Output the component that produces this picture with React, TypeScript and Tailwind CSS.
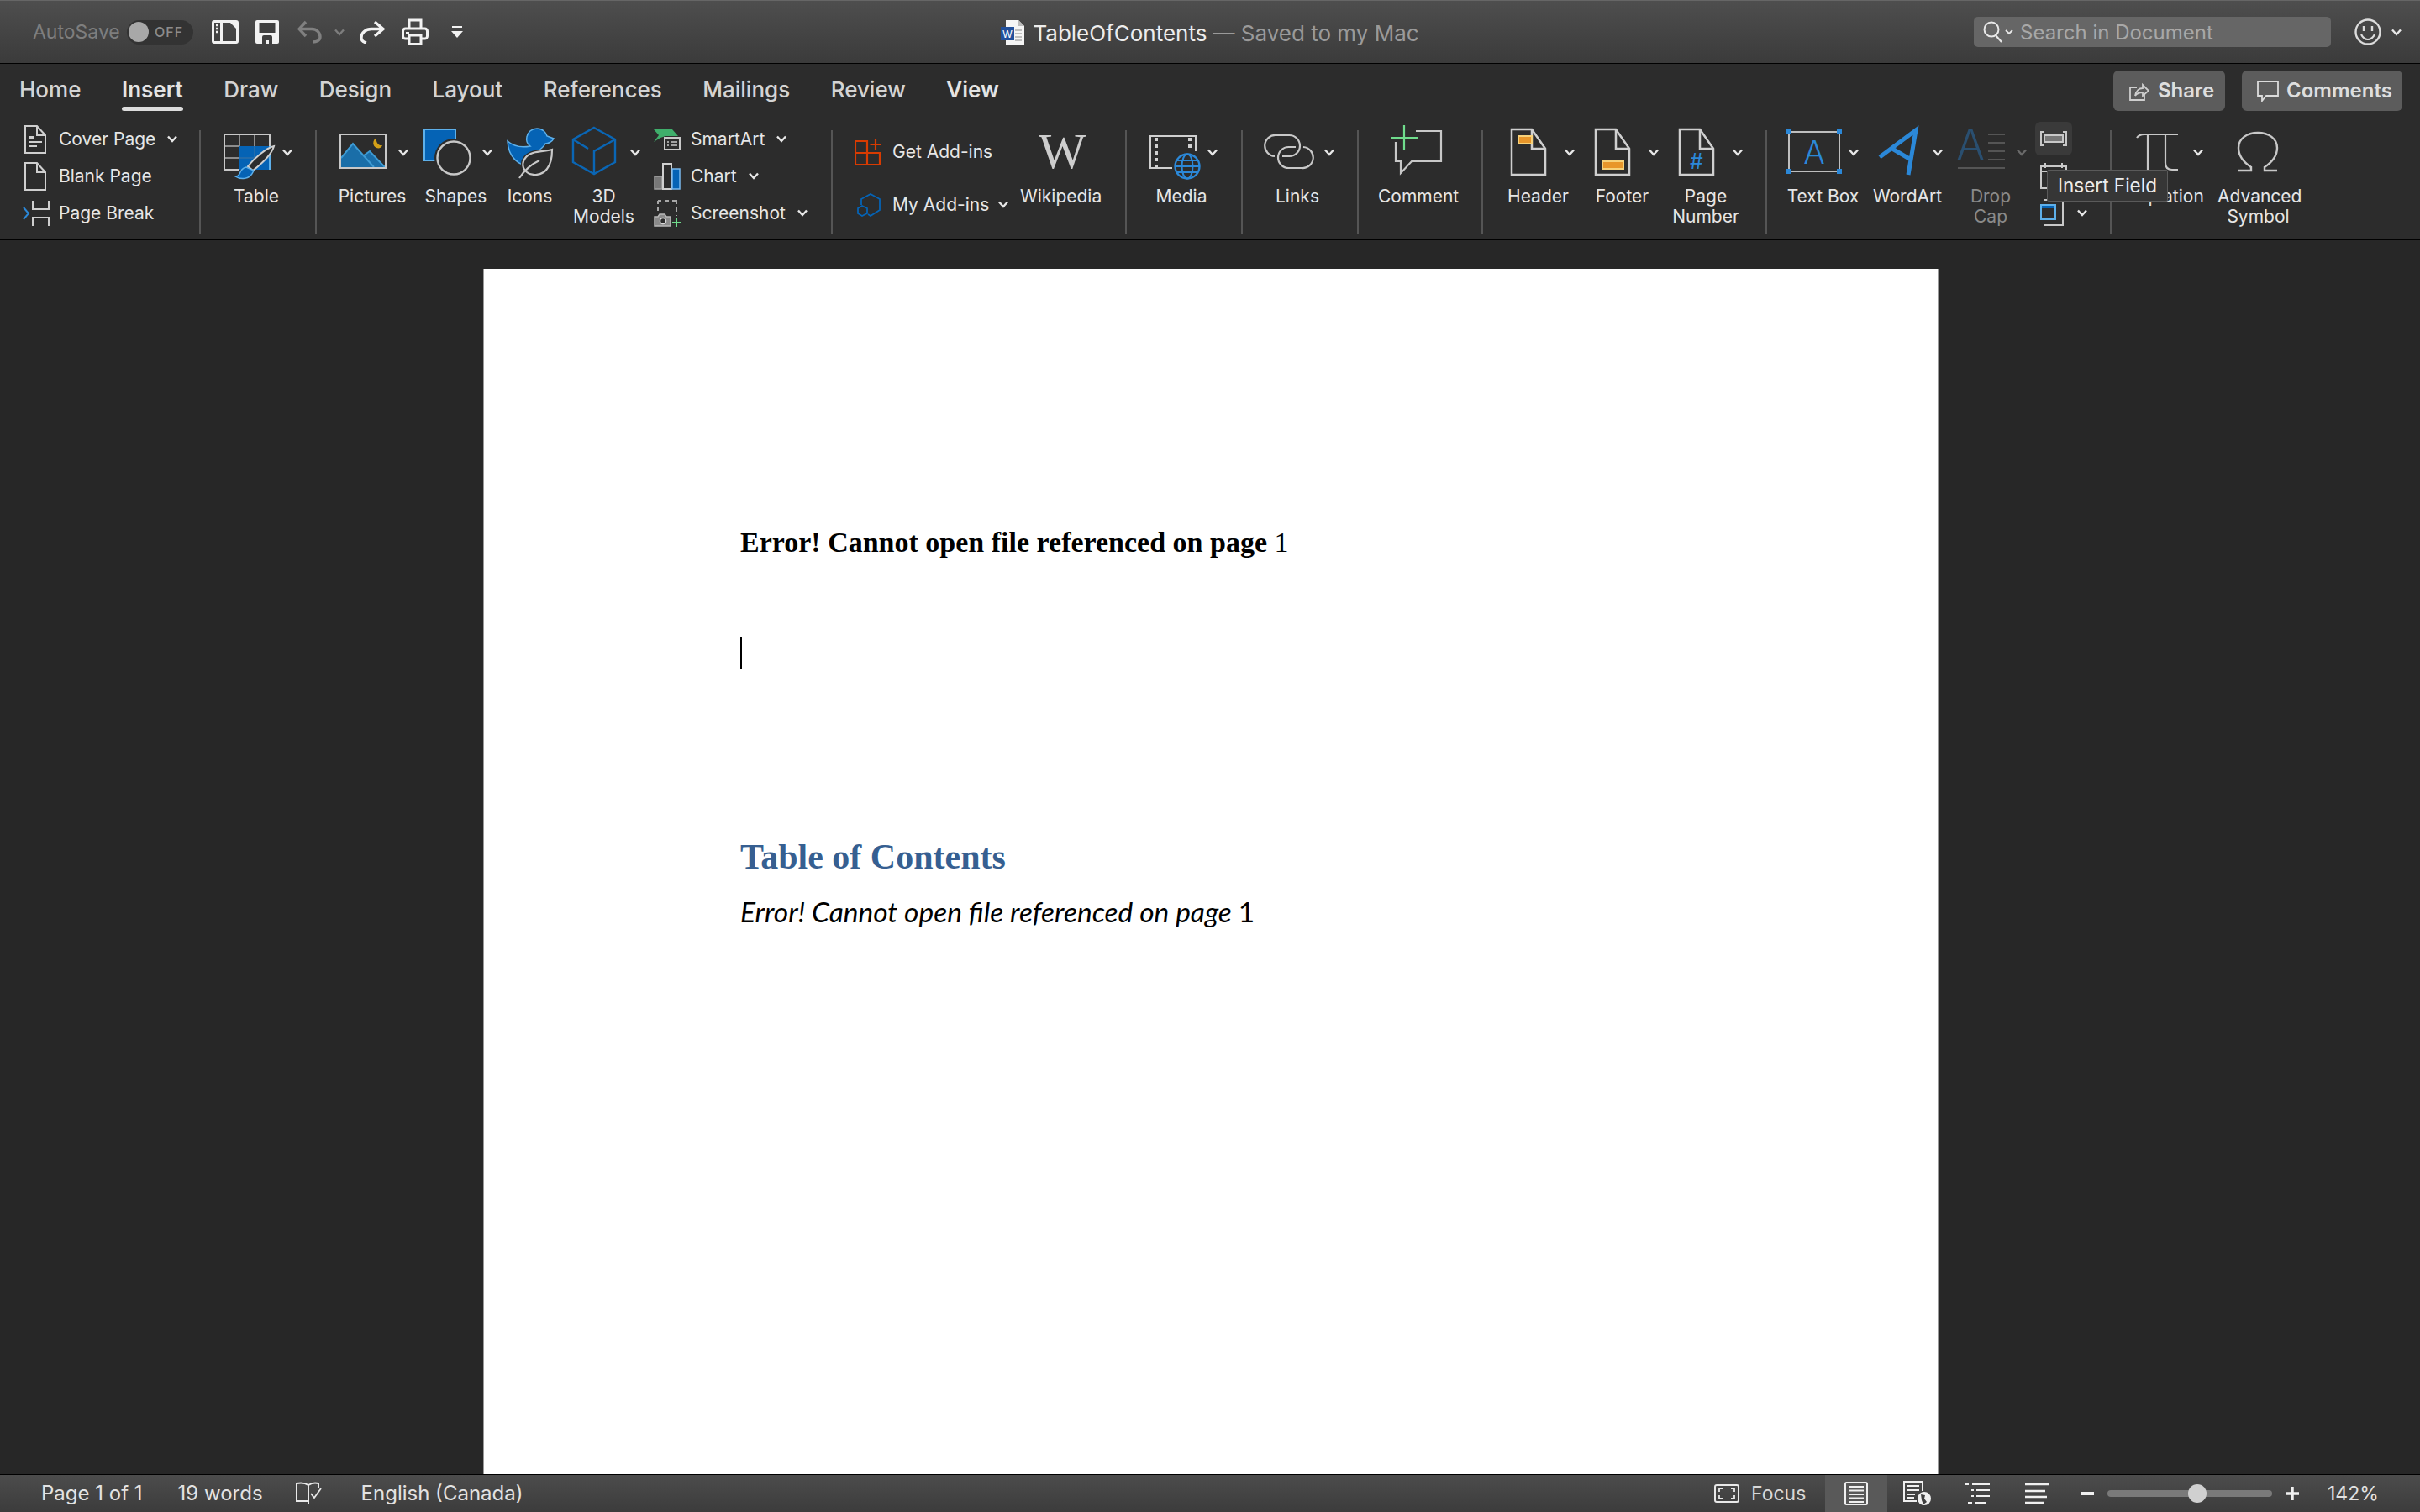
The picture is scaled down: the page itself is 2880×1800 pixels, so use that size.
import type { ReactNode } from "react";

const GRAY = "#cfcfcf";
const BLUE = "#2b88d8";
const DEEP = "#0563b5";
const LIGHT = "#5eb0ea";

const Chevron = ({ className = "", color = "#e8e8e8" }: { className?: string; color?: string }) => (
  <svg className={`shrink-0 ${className}`} width="12" height="9" viewBox="0 0 12 9" fill="none">
    <path d="M1 1.500 6 7l5-5.500" stroke={color} strokeWidth="2.400" />
  </svg>
);

// ribbon button with a big icon over a one or two line label
const Big = ({
  cls,
  top = "",
  icon,
  chev = true,
  gap = "ml-[14px]",
  dim = false,
  children,
}: {
  cls: string;
  top?: string;
  icon: ReactNode;
  chev?: boolean;
  gap?: string;
  dim?: boolean;
  children: ReactNode;
}) => (
  <div className={`flex shrink-0 flex-col pt-[2px] ${cls}`}>
    <div className={`flex h-[72px] items-center ${top}`}>
      {icon}
      {chev && <Chevron className={gap} color={dim ? "#6a6a6a" : "#e8e8e8"} />}
    </div>
    <div className={`mt-[5px] whitespace-nowrap text-center text-[21px] leading-[24px] ${dim ? "text-[#8a8a8a]" : "text-[#e6e6e6]"}`}>
      {children}
    </div>
  </div>
);

const Small = ({ icon, label, chev = true, cls = "" }: { icon: ReactNode; label: string; chev?: boolean; cls?: string }) => (
  <div className={`flex h-[44px] items-center whitespace-nowrap pt-[1px] text-[21px] text-[#e6e6e6] ${cls}`}>
    {icon}
    <span className="ml-[12px]">{label}</span>
    {chev && <Chevron className="ml-[14px]" />}
  </div>
);

const Sep = () => <div className="mt-[12px] h-[124px] w-[2px] shrink-0 bg-[#555]" />;

const Ico = ({ w, h = 72, children }: { w: number; h?: number; children: ReactNode }) => (
  <svg className="shrink-0 overflow-visible" width={w} height={h} viewBox={`0 0 ${w} ${h}`} fill="none">
    {children}
  </svg>
);

const DocShape = ({ children }: { children?: ReactNode }) => (
  <Ico w={50}>
    <path d="M1 9h24l16 23v31H1z" stroke={GRAY} strokeWidth="2.500" />
    <path d="M25 9v23h16" stroke={GRAY} strokeWidth="2.500" />
    {children}
  </Ico>
);

const tabs = ["Home", "Insert", "Draw", "Design", "Layout", "References", "Mailings", "Review", "View"];

export default function App() {
  return (
    <div className="flex h-[1800px] w-[2880px] flex-col overflow-hidden bg-[#272727] font-['Inter','Liberation_Sans',sans-serif]">
      {/* title bar */}
      <div className="grid h-[76px] shrink-0 grid-cols-[1fr_auto_1fr] items-center border-b-[1px] border-t-[1px] border-b-black border-t-[#666] bg-gradient-to-b from-[#4e4e4e] to-[#3b3b3b]">
        <div className="flex items-center pl-[39px]">
          <span className="w-[100px] whitespace-nowrap text-[23px] text-[#7e7e7e]">AutoSave</span>
          <div className="ml-[12px] flex h-[29px] w-[79px] items-center rounded-full bg-[#333] pl-[2px]">
            <div className="h-[24px] w-[24px] rounded-full bg-[#a8a8a8]" />
            <span className="ml-[7px] text-[16px] font-medium tracking-[1px] text-[#8c8c8c]">OFF</span>
          </div>
          <svg className="ml-[22px] shrink-0" width="32" height="28" viewBox="0 0 32 28" fill="none">
            <rect x="1.500" y="1.500" width="29" height="25" rx="1.500" stroke="#f2f2f2" strokeWidth="3" />
            <path d="M11.500 2v24" stroke="#f2f2f2" strokeWidth="3" />
            <path d="M5 6h2.500M5 10h2.500M5 14h2.500" stroke="#f2f2f2" strokeWidth="2.500" />
            <path d="M21 2h9v9z" fill="#f2f2f2" />
          </svg>
          <svg className="ml-[20px] shrink-0" width="28" height="28" viewBox="0 0 28 28" fill="none">
            <path d="M2 0h24a2 2 0 0 1 2 2v24a2 2 0 0 1-2 2H2a2 2 0 0 1-2-2V2a2 2 0 0 1 2-2z" fill="#f2f2f2" />
            <rect x="4.500" y="3" width="19" height="12" fill="#3f3f3f" />
            <path d="M8 28v-8a2 2 0 0 1 2-2h8a2 2 0 0 1 2 2v8h-4v-4h-4v4z" fill="#3f3f3f" />
          </svg>
          <svg className="ml-[22px] shrink-0" width="29" height="28" viewBox="0 0 29 28" fill="none">
            <path d="M10 2 2 10.500l8 8.500M2 10.500h15c6 0 10 4.500 10 9.500 0 4-4 6-9 6" stroke="#808080" strokeWidth="3.400" />
          </svg>
          <Chevron className="ml-[15px]" color="#7d7d7d" />
          <svg className="ml-[18px] shrink-0" width="30" height="28" viewBox="0 0 30 28" fill="none">
            <path d="M18 2l10 8.500-10 8.500M28 10.500H14C7 10.500 2 15 2 21c0 3 2 5 6 6" stroke="#f2f2f2" strokeWidth="3.400" />
          </svg>
          <svg className="ml-[20px] shrink-0" width="32" height="32" viewBox="0 0 32 32" fill="none">
            <path d="M9 12V2h14v10" stroke="#f2f2f2" strokeWidth="3" />
            <rect x="1.500" y="12" width="29" height="12" rx="3" stroke="#f2f2f2" strokeWidth="3" />
            <rect x="9" y="20" width="14" height="10.500" fill="#3f3f3f" stroke="#f2f2f2" strokeWidth="3" />
            <path d="M5 17h4" stroke="#f2f2f2" strokeWidth="2" />
          </svg>
          <svg className="ml-[27px] shrink-0" width="14" height="14" viewBox="0 0 14 14" fill="#f2f2f2">
            <rect x="1" y="0" width="12" height="2" />
            <path d="M0 6h14l-7 8z" />
          </svg>
        </div>
        <div className="mt-[2px] flex items-center whitespace-nowrap text-[26px]">
          <svg className="shrink-0" width="28" height="30" viewBox="0 0 28 30" fill="none">
            <path d="M6 0h15l7 7v23H6z" fill="#f5f5f5" />
            <path d="M21 0v7h7" fill="#bbb" />
            <path d="M17 12h8M17 16h8M17 20h8M17 24h8" stroke="#8a8a8a" strokeWidth="1.200" />
            <rect x="0" y="8" width="16" height="16" fill="#22509c" />
            <text x="8" y="21" textAnchor="middle" fontSize="12" fill="#fff" fontFamily="Inter">W</text>
          </svg>
          <span className="ml-[10px] text-[#ededed]">TableOfContents</span>
          <span className="ml-[7px] text-[#9a9a9a]">— Saved to my Mac</span>
        </div>
        <div className="flex items-center justify-end pr-[22px]">
          <div className="flex h-[36px] w-[425px] items-center rounded-[5px] bg-[#666] pl-[11px]">
            <svg className="shrink-0" width="23" height="26" viewBox="0 0 23 26" fill="none">
              <circle cx="10" cy="10" r="8.500" stroke="#e8e8e8" strokeWidth="2" />
              <path d="m15 17 7 8" stroke="#e8e8e8" strokeWidth="2" />
            </svg>
            <svg className="ml-[3px] shrink-0" width="10" height="7" viewBox="0 0 10 7" fill="none">
              <path d="M1 1l4 4 4-4" stroke="#e8e8e8" strokeWidth="1.800" />
            </svg>
            <span className="ml-[8px] pt-[2px] text-[24px] text-[#a8a8a8]">Search in Document</span>
          </div>
          <svg className="ml-[28px] shrink-0" width="32" height="32" viewBox="0 0 32 32" fill="none">
            <circle cx="16" cy="16" r="14.500" stroke="#dcdcdc" strokeWidth="2.400" />
            <path d="M11 9v6M21 9v6" stroke="#dcdcdc" strokeWidth="2.400" />
            <path d="M8 19c2 4 5 6 8 6s6-2 8-6" stroke="#dcdcdc" strokeWidth="2.200" />
          </svg>
          <Chevron className="ml-[12px]" />
        </div>
      </div>

      {/* ribbon */}
      <div className="h-[210px] shrink-0 border-b-[2px] border-b-black bg-[#2c2c2c]">
        <div className="flex h-[67px] items-start justify-between pl-[23px] pr-[21px]">
          <div className="flex gap-[48.500px] pt-[16px]">
            {tabs.map((t) => (
              <div key={t} className="flex flex-col">
                <span className={`text-[26px] leading-[30px] ${t === "Insert" || t === "View" ? "font-semibold text-[#e4e4e4]" : "font-medium text-[#d4d4d4]"}`}>
                  {t}
                </span>
                <div className={`mt-[5px] h-[5px] rounded-full ${t === "Insert" ? "bg-[#dcdcdc]" : "bg-transparent"}`} />
              </div>
            ))}
          </div>
          <div className="flex gap-[20px] pt-[8px]">
            <div className="flex h-[48px] w-[133px] items-center rounded-[6px] bg-[#5c5c5c] pl-[18px]">
              <svg className="shrink-0" width="25" height="24" viewBox="0 0 25 24" fill="none">
                <path d="M10 8H2v15h17v-7" stroke="#cfcfcf" strokeWidth="1.800" />
                <path d="M8 18c1-6 5-9 9-9V5l7 7-7 6v-4c-4 0-7 1-9 4z" stroke="#cfcfcf" strokeWidth="1.800" />
              </svg>
              <span className="ml-[10px] text-[24px] font-semibold text-[#dedede]">Share</span>
            </div>
            <div className="flex h-[48px] w-[191px] items-center rounded-[6px] bg-[#5c5c5c] pl-[18px]">
              <svg className="shrink-0" width="26" height="25" viewBox="0 0 26 25" fill="none">
                <path d="M1 1h24v17H11l-5 6v-6H1z" stroke="#dcdcdc" strokeWidth="1.800" />
              </svg>
              <span className="ml-[9px] text-[24px] font-semibold text-[#dedede]">Comments</span>
            </div>
          </div>
        </div>

        <div className="relative flex h-[141px]">
          {/* pages */}
          <div className="flex w-[237px] shrink-0 flex-col pl-[29px]">
            <Small
              label="Cover Page"
              cls="[&>span]:ml-[15px]"
              icon={
                <svg className="shrink-0" width="26" height="34" viewBox="0 0 26 34" fill="none">
                  <path d="M1 1h14l10 11v21H1z" stroke={GRAY} strokeWidth="2" />
                  <path d="M15 1v11h10" stroke={GRAY} strokeWidth="2" />
                  <path d="M5 13h6v4H5z" fill={GRAY} />
                  <path d="M5 20h16M5 25h10" stroke={GRAY} strokeWidth="2" />
                </svg>
              }
            />
            <Small
              label="Blank Page"
              chev={false}
              cls="[&>span]:ml-[15px]"
              icon={
                <svg className="shrink-0" width="26" height="34" viewBox="0 0 26 34" fill="none">
                  <path d="M1 1h14l10 11v21H1z" stroke={GRAY} strokeWidth="2" />
                  <path d="M15 1v11h10" stroke={GRAY} strokeWidth="2" />
                </svg>
              }
            />
            <Small
              label="Page Break"
              chev={false}
              cls="-ml-[2px] [&>span]:ml-[11px]"
              icon={
                <svg className="shrink-0" width="32" height="32" viewBox="0 0 32 32" fill="none">
                  <path d="M12 1v10h19V1M12 31V21h19v10" stroke={GRAY} strokeWidth="2" />
                  <path d="M1 9l6 7-6 7" stroke={BLUE} strokeWidth="2" />
                </svg>
              }
            />
          </div>
          <Sep />

          {/* table */}
          <div className="flex w-[136px] shrink-0">
            <Big
              cls="ml-[6px] w-[120px]"
              top="pl-[21px]"
              icon={
                <Ico w={56}>
                  <path d="M19 15v14M37 15v14M1 29h18M1 43h18" stroke="#8c8c8c" strokeWidth="2" />
                  <path d="M19 29h36v28H19z" fill={DEEP} />
                  <path d="M19 43h36M37 29v28" stroke="#2c6fa8" strokeWidth="1.600" />
                  <path d="M55 29v28" stroke={LIGHT} strokeWidth="2" />
                  <path d="M19 57H1V15h54v14" stroke="#c8c8c8" strokeWidth="2" />
                  <path d="M60 29C51 31 37 43 29 53l6 5C44 51 57 40 60 29z" fill="#2c2c2c" stroke="#cfcfcf" strokeWidth="2" />
                  <path d="M27 54c-5 1-7 5-8 8-1 2-3 3-5 3 6 4 17 4 21-5l1-2z" fill={DEEP} stroke={LIGHT} strokeWidth="1.500" />
                </Ico>
              }
            >
              Table
            </Big>
          </div>
          <Sep />

          {/* illustrations */}
          <div className="flex w-[612px] shrink-0">
            <Big
              cls="ml-[25px] w-[82px]"
              top="pl-[2px]"
              icon={
                <Ico w={56}>
                  <path d="M2 54V43l14-17 13 14 7-5 18 19z" fill="#1a6ea8" />
                  <path d="M2 43l14-17 25 28M29 40l7-5 18 19" stroke="#3d9bd4" strokeWidth="2" />
                  <rect x="1" y="15" width="54" height="40" stroke="#c8c8c8" strokeWidth="2" />
                  <path d="M44 19c-5 3-5 10 0 12 3 1 6 0 7-3-4 1-8-3-7-9z" fill="#d4a017" />
                </Ico>
              }
            >
              Pictures
            </Big>
            <Big
              cls="ml-[16px] w-[85px]"
              top="pl-[4px]"
              icon={
                <Ico w={56}>
                  <rect x="1" y="9" width="37" height="37" fill={DEEP} stroke={LIGHT} strokeWidth="2" />
                  <circle cx="36" cy="43" r="23" fill="#2c2c2c" />
                  <circle cx="36" cy="43" r="19.500" stroke="#c8c8c8" strokeWidth="2.400" />
                </Ico>
              }
            >
              Shapes
            </Big>
            <Big
              cls="ml-[11px] w-[69px]"
              top="pl-[7px]"
              chev={false}
              icon={
                <Ico w={57}>
                  <path
                    d="M1 23c7 6 17 8 27 6-4-3-5-7-4-11 1-6 6-10 12-10 7 0 11 5 12 9l8 3c-2 4-7 6-10 6-2 4-6 7-10 10L30 53C14 53 2 42 1 23z"
                    fill={DEEP}
                    stroke={LIGHT}
                    strokeWidth="1.500"
                  />
                  <path d="M54 33c-10 3-24 1-31 9-6 7-4 14 1 18 6 5 18 4 24-4 5-6 6-14 6-23z" fill="#2c2c2c" stroke="#2c2c2c" strokeWidth="5" />
                  <path d="M54 33c-10 3-24 1-31 9-6 7-4 14 1 18 6 5 18 4 24-4 5-6 6-14 6-23z" stroke="#c8c8c8" strokeWidth="2.200" />
                  <path d="M15 67c6-9 13-16 24-21" stroke="#c8c8c8" strokeWidth="2.200" />
                </Ico>
              }
            >
              Icons
            </Big>
            <Big
              cls="ml-[12px] w-[83px]"
              top="pl-[5px]"
              icon={
                <Ico w={54}>
                  <path d="M25 7l25 14v27L25 62 0 48V21zM0 21l18 11M50 21 25 35v27" stroke="#0a66b5" strokeWidth="2.400" />
                </Ico>
              }
            >
              3D
              <br />
              Models
            </Big>
            <div className="ml-[18px] flex flex-col">
              <Small
                label="SmartArt"
                icon={
                  <svg className="shrink-0" width="32" height="26" viewBox="0 0 32 26" fill="none">
                    <path d="M0 1h22l7 8H14l-6 2-8 5 6-8z" fill="#3fae6b" />
                    <rect x="13" y="11" width="18" height="14" fill="#2c2c2c" stroke="#c8c8c8" strokeWidth="2" />
                    <path d="M16 16h2M20 16h8M16 20h2M20 20h8" stroke="#c8c8c8" strokeWidth="1.600" />
                  </svg>
                }
              />
              <Small
                label="Chart"
                icon={
                  <svg className="shrink-0" width="32" height="32" viewBox="0 0 32 32" fill="none">
                    <rect x="1" y="16" width="9" height="15" fill="#777" stroke="#a0a0a0" strokeWidth="1.500" />
                    <rect x="11" y="1" width="10" height="30" stroke="#d0d0d0" strokeWidth="2" />
                    <rect x="22" y="7" width="9" height="24" fill={DEEP} stroke="#7ab8ec" strokeWidth="1.500" />
                  </svg>
                }
              />
              <Small
                label="Screenshot"
                icon={
                  <svg className="shrink-0" width="32" height="32" viewBox="0 0 32 32" fill="none">
                    <path d="M5 1h4M13 1h5M22 1h5v4M27 9v5M27 18v1M5 1v4M5 9v4" stroke="#a8a8a8" strokeWidth="2" />
                    <path d="M1 20h4l2-3h6l2 3h5v11H1z" fill="#8a8a8a" stroke="#b8b8b8" strokeWidth="1.500" />
                    <circle cx="11" cy="25" r="3.500" fill="#2c2c2c" stroke="#d8d8d8" strokeWidth="1.500" />
                    <path d="M27 22v10M22 27h10" stroke="#6fdc8c" strokeWidth="2" />
                  </svg>
                }
              />
            </div>
          </div>
          <Sep />

          {/* add-ins */}
          <div className="flex w-[348px] shrink-0">
            <div className="ml-[26px] flex w-[183px] shrink-0 flex-col gap-[19px] pt-[15px]">
              <Small
                label="Get Add-ins"
                chev={false}
                icon={
                  <svg className="shrink-0" width="33" height="32" viewBox="0 0 33 32" fill="none">
                    <path d="M1 3h14v14h15v14H1zM1 17h14v14" stroke="#d83b01" strokeWidth="2.200" />
                    <path d="M25 0v13M18.500 7h13" stroke="#d83b01" strokeWidth="2.200" />
                  </svg>
                }
              />
              <Small
                label="My Add-ins"
                cls="[&>svg:last-child]:ml-[11px]"
                icon={
                  <svg className="ml-[3px] shrink-0" width="30" height="28" viewBox="0 0 30 28" fill="none">
                    <path d="M5 14V7l11-6 11 6v13l-11 7-3-2" stroke={DEEP} strokeWidth="1.800" />
                    <path d="M6 15l6 3v6l-6 3-5-3v-6z" stroke={DEEP} strokeWidth="1.800" />
                  </svg>
                }
              />
            </div>
            <Big
              cls="ml-[14px] w-[97px]"
              top="pb-[2px] pl-[22px]"
              chev={false}
              icon={
                <span className="font-['Liberation_Serif',serif] text-[60px] leading-none text-[#cdcdcd]">W</span>
              }
            >
              Wikipedia
            </Big>
          </div>
          <Sep />

          {/* media */}
          <div className="flex w-[136px] shrink-0">
            <Big
              cls="ml-[25px] w-[80px]"
              top="pl-[2px]"
              gap="ml-[12px]"
              icon={
                <Ico w={57}>
                  <path d="M27 55H1V17h54v18" stroke="#d0d0d0" strokeWidth="2" />
                  <path d="M6 19h4v4H6zM6 27h4v4H6zM6 35h4v4H6zM6 43h4v4H6zM6 51h4v3H6zM46 19h4v4h-4zM46 27h4v4h-4z" fill="#d0d0d0" />
                  <circle cx="45" cy="53" r="14.500" fill="#2c2c2c" stroke={BLUE} strokeWidth="2.400" />
                  <ellipse cx="45" cy="53" rx="6.500" ry="14.500" stroke={BLUE} strokeWidth="2" />
                  <path d="M31 53h28M33 46h24M33 60h24" stroke={BLUE} strokeWidth="2" />
                </Ico>
              }
            >
              Media
            </Big>
          </div>
          <Sep />

          {/* links */}
          <div className="flex w-[136px] shrink-0">
            <Big
              cls="ml-[25px] w-[80px]"
              top="pl-[2px]"
              icon={
                <Ico w={56}>
                  <path d="M11 41A12.500 12.500 0 0 1 12.500 16h16a12.500 12.500 0 0 1 0 25H20" stroke="#c8c8c8" strokeWidth="2.200" />
                  <path d="M45 30a12.500 12.500 0 0 1-1.500 25h-16a12.500 12.500 0 0 1 0-25H36" stroke="#c8c8c8" strokeWidth="2.200" />
                </Ico>
              }
            >
              Links
            </Big>
          </div>
          <Sep />

          {/* comment */}
          <div className="flex w-[146px] shrink-0">
            <Big
              cls="ml-[23px] w-[96px]"
              top="pl-[16px]"
              chev={false}
              icon={
                <Ico w={60}>
                  <path d="M29 11h30v36H24L11 61V47H5V24" stroke="#c8c8c8" strokeWidth="2.200" />
                  <path d="M0 19h31M15 4v30" stroke="#6fdc8c" strokeWidth="2.200" />
                </Ico>
              }
            >
              Comment
            </Big>
          </div>
          <Sep />

          {/* header and footer */}
          <div className="flex w-[336px] shrink-0">
            <Big
              cls="ml-[25px] w-[81px]"
              top="pl-[8px]"
              icon={
                <DocShape>
                  <rect x="9" y="17" width="16" height="9" fill="#e8962a" stroke="#f7d27a" strokeWidth="2" />
                </DocShape>
              }
            >
              Header
            </Big>
            <Big
              cls="ml-[19px] w-[81px]"
              top="pl-[8px]"
              icon={
                <DocShape>
                  <rect x="9" y="47" width="25" height="9" fill="#e8962a" stroke="#f7d27a" strokeWidth="2" />
                </DocShape>
              }
            >
              Footer
            </Big>
            <Big
              cls="ml-[18px] w-[82px]"
              top="pl-[9px]"
              icon={
                <DocShape>
                  <text x="21" y="56" textAnchor="middle" fontSize="25" fill={BLUE} fontFamily="Inter">#</text>
                </DocShape>
              }
            >
              Page
              <br />
              Number
            </Big>
          </div>
          <Sep />

          {/* text */}
          <div className="flex w-[408px] shrink-0">
            <Big
              cls="ml-[23px] w-[87px]"
              top="pl-[2px]"
              gap="ml-[10px]"
              icon={
                <Ico w={62}>
                  <rect x="1" y="12" width="60" height="47" stroke="#cfcfcf" strokeWidth="1.800" />
                  <path d="M-2 9h6v6h-6zM-2 56h6v6h-6zM58 9h6v6h-6zM58 56h6v6h-6z" fill={BLUE} />
                  <text x="31" y="50" textAnchor="middle" fontSize="38" fontWeight="300" fill={BLUE} fontFamily="Inter">A</text>
                </Ico>
              }
            >
              Text Box
            </Big>
            <Big
              cls="ml-[15px] w-[84px]"
              top="pl-[8px]"
              icon={
                <Ico w={50}>
                  <path d="M1 42 44 10l-9 53M16 32l22 13" stroke={BLUE} strokeWidth="5" />
                </Ico>
              }
            >
              WordArt
            </Big>
            <Big
              dim
              cls="ml-[14px] w-[86px]"
              top="pl-[4px]"
              icon={
                <Ico w={56}>
                  <text x="15" y="45" textAnchor="middle" fontSize="50" fontWeight="300" fill="#2a4f70" fontFamily="Inter">A</text>
                  <path d="M36 15h20M36 25h20M36 35h20M36 45h20M0 55h56" stroke="#555" strokeWidth="2" />
                </Ico>
              }
            >
              Drop
              <br />
              Cap
            </Big>
            <div className="ml-[10px] flex w-[70px] shrink-0 flex-col pt-[2px]">
              <div className="flex h-[40px] w-[44px] items-center justify-center rounded-[6px] bg-[#3a3a3a]">
                <svg width="32" height="18" viewBox="0 0 32 18" fill="none">
                  <path d="M5 1H1v16h4M27 1h4v16h-4" stroke="#c8c8c8" strokeWidth="2" />
                  <rect x="5" y="5" width="22" height="8" fill="#777" stroke="#c8c8c8" strokeWidth="2" />
                </svg>
              </div>
              <svg className="ml-[6px] mt-[8px] shrink-0" width="32" height="32" viewBox="0 0 32 32" fill="none">
                <path d="M1 5h30v26H1zM1 11h30M6 1v6M26 1v6" stroke="#c8c8c8" strokeWidth="2" />
              </svg>
              <div className="mt-[12px] flex items-center pl-[6px]">
                <svg className="shrink-0" width="28" height="32" viewBox="0 0 28 32" fill="none">
                  <path d="M5 1h22v30H5" stroke="#c8c8c8" strokeWidth="2" />
                  <rect x="1" y="7" width="17" height="17" fill="#2c2c2c" stroke={LIGHT} strokeWidth="2" />
                  <rect x="2" y="8" width="15" height="3" fill={DEEP} />
                </svg>
                <Chevron className="ml-[16px]" />
              </div>
            </div>
          </div>
          <Sep />

          {/* symbols */}
          <div className="flex min-w-0 flex-1">
            <Big
              cls="ml-[23px] w-[87px]"
              top="pl-[7px]"
              icon={
                <Ico w={53}>
                  <path d="M0 19c2-3 5-4 9-4h40M13 15v44M34 15v34c0 5 3 8 8 8h7" stroke="#c8c8c8" strokeWidth="2.200" />
                </Ico>
              }
            >
              Equation
            </Big>
            <Big
              cls="ml-[16px] w-[97px]"
              top="pl-[25px]"
              chev={false}
              icon={
                <Ico w={46}>
                  <path d="M0 58h15v-4C6 48 0 40 0 31 0 20 10 13 23 13s23 7 23 18c0 9-6 17-15 23v4h15" stroke="#c8c8c8" strokeWidth="2.400" />
                </Ico>
              }
            >
              Advanced
              <br />
              Symbol
            </Big>
          </div>

          {/* tooltip */}
          <div className="absolute left-[2436px] top-[59px] flex h-[38px] w-[144px] items-center justify-center whitespace-nowrap rounded-[2px] border border-[#5a5a5a] bg-[#363636] text-[22.500px] text-[#ececec]">
            Insert Field
          </div>
        </div>
      </div>

      {/* document */}
      <div className="min-h-0 flex-1 pl-[575px] pt-[34px]">
        <div className="h-full w-[1732px] border-x border-x-[#999] bg-white pl-[305px] pt-[306px] text-black">
          <div className="font-['Liberation_Serif',serif] text-[34px] font-bold leading-[40px]">
            Error! Cannot open file referenced on page <span className="font-normal">1</span>
          </div>
          <div className="mt-[92px] h-[38px] w-[2px] bg-black" />
          <div className="mt-[201px] font-['Liberation_Serif',serif] text-[42px] font-bold leading-[46px] text-[#365f91]">
            Table of Contents
          </div>
          <div className="mt-[24px] font-['Lato',sans-serif] text-[33.500px] italic leading-[36px]">
            Error! Cannot open file referenced on page <span className="not-italic">1</span>
          </div>
        </div>
      </div>

      {/* status bar */}
      <div className="flex h-[45px] shrink-0 items-stretch justify-between border-t border-t-black bg-gradient-to-b from-[#4c4c4c] to-[#3c3c3c] text-[#e2e2e2]">
        <div className="flex items-center whitespace-nowrap pl-[49px] text-[24px]">
          <span>Page 1 of 1</span>
          <span className="ml-[42px]">19 words</span>
          <svg className="ml-[39px] shrink-0" width="31" height="28" viewBox="0 0 31 28" fill="none">
            <path d="M15 4C12 2 6 1 1 2v21h14V4zm0 19v4" stroke="#e8e8e8" strokeWidth="2" />
            <path d="M15 4c3-2 8-3 12-2v5" stroke="#e8e8e8" strokeWidth="2" />
            <path d="M18 14l4 5 8-11" stroke="#e8e8e8" strokeWidth="1.800" />
          </svg>
          <span className="ml-[47px]">English (Canada)</span>
        </div>
        <div className="flex items-center whitespace-nowrap pr-[48px] text-[23px]">
          <svg className="shrink-0" width="30" height="22" viewBox="0 0 30 22" fill="none">
            <rect x="1" y="1" width="28" height="20" rx="2" stroke="#e8e8e8" strokeWidth="2" />
            <path d="M6 9V5h4M24 9V5h-4M6 13v4h4M24 13v4h-4" stroke="#e8e8e8" strokeWidth="1.800" />
          </svg>
          <span className="ml-[14px] w-[66px] text-[#d8d8d8]">Focus</span>
          <div className="ml-[22px] flex h-full w-[74px] items-center justify-center bg-[#595959]">
            <svg width="28" height="28" viewBox="0 0 28 28" fill="none">
              <rect x="1" y="1" width="26" height="26" rx="1.500" stroke="#f0f0f0" strokeWidth="2" />
              <path d="M5 6h18M5 10.500h18M5 15h18M5 19.500h18M5 24h18" stroke="#f0f0f0" strokeWidth="2" />
            </svg>
          </div>
          <svg className="ml-[19px] shrink-0" width="33" height="30" viewBox="0 0 33 30" fill="none">
            <path d="M16 24H1V1h22v11" stroke="#f0f0f0" strokeWidth="2" />
            <path d="M5 6h14M5 11h14M5 16h9M5 20h8" stroke="#f0f0f0" strokeWidth="2" />
            <circle cx="25" cy="21" r="8" fill="#f0f0f0" />
            <path d="M21 16l5 1-1 4 3 4-4 3-2-5z" fill="#3f3f3f" />
          </svg>
          <svg className="ml-[40px] shrink-0" width="30" height="26" viewBox="0 0 30 26" fill="none">
            <path d="M0 2h5M9 2h21M8 9h3M14 9h16M8 16h3M14 16h16M4 24h5M12 24h14" stroke="#f0f0f0" strokeWidth="2" />
          </svg>
          <svg className="ml-[42px] shrink-0" width="28" height="26" viewBox="0 0 28 26" fill="none">
            <path d="M0 2h28M0 10h24M0 17h26M0 24h22" stroke="#f0f0f0" strokeWidth="2.400" />
          </svg>
          <div className="ml-[38px] h-[4px] w-[16px] bg-[#f0f0f0]" />
          <div className="relative ml-[16px] h-[8px] w-[196px] rounded-full bg-[#7a7a7a]">
            <div className="absolute left-[96px] top-[-7px] h-[22px] w-[22px] rounded-full bg-[#d0d0d0]" />
          </div>
          <svg className="ml-[16px] shrink-0" width="16" height="16" viewBox="0 0 16 16" fill="none">
            <path d="M8 0v16M0 8h16" stroke="#f0f0f0" strokeWidth="3.500" />
          </svg>
          <span className="ml-[34px] w-[62px]">142%</span>
        </div>
      </div>
    </div>
  );
}
